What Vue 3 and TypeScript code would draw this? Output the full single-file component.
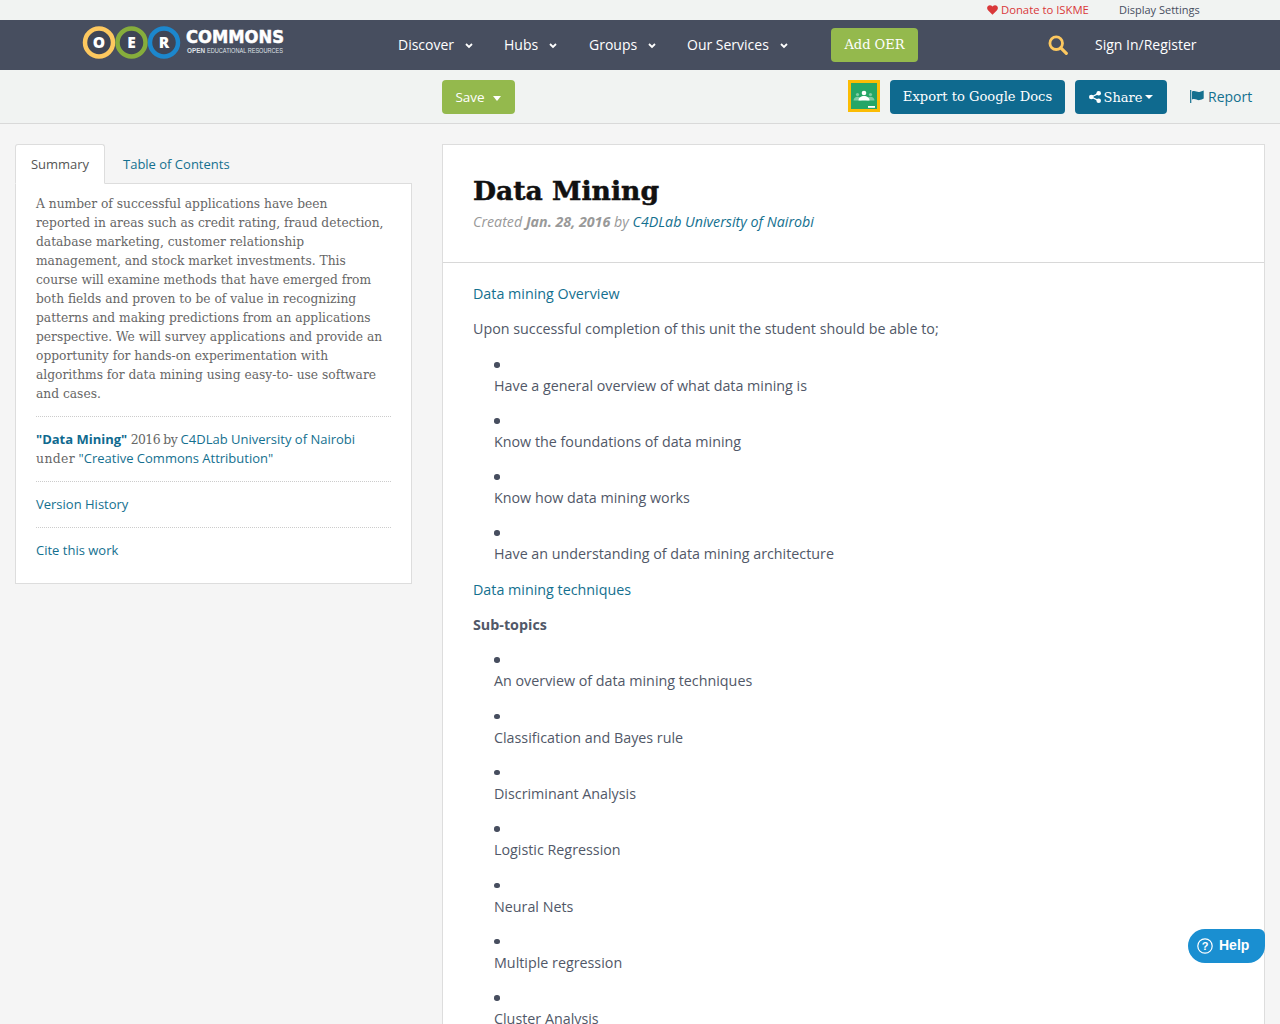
<script setup lang="ts">
const summaryLines: string[] = [
  'A number of successful applications have been',
  'reported in areas such as credit rating, fraud detection,',
  'database marketing, customer relationship',
  'management, and stock market investments. This',
  'course will examine methods that have emerged from',
  'both fields and proven to be of value in recognizing',
  'patterns and making predictions from an applications',
  'perspective. We will survey applications and provide an',
  'opportunity for hands-on experimentation with',
  'algorithms for data mining using easy-to- use software',
  'and cases.'
]
const navItems: { label: string; cls: string }[] = [
  { label: 'Discover', cls: 'n1' },
  { label: 'Hubs', cls: 'n2' },
  { label: 'Groups', cls: 'n3' },
  { label: 'Our Services', cls: 'n4' }
]
const outcomes: string[] = [
  'Have a general overview of what data mining is',
  'Know the foundations of data mining',
  'Know how data mining works',
  'Have an understanding of data mining architecture'
]
const topics: string[] = [
  'An overview of data mining techniques',
  'Classification and Bayes rule',
  'Discriminant Analysis',
  'Logistic Regression',
  'Neural Nets',
  'Multiple regression',
  'Cluster Analysis'
]
</script>

<template>
  <div class="page">
    <div class="topbar">
      <a class="donate">
        <svg class="heart" viewBox="0 0 24 22" width="11" height="10"><path d="M12 21.5 2.600 12.200C-.6 9-.6 4.600 2 2.200 4.700-.3 9-.2 12 3.400 15-.2 19.300-.3 22 2.200c2.600 2.400 2.600 6.800-.6 10z" fill="#d9383a"/></svg>
        Donate to ISKME
      </a>
      <a class="display">Display Settings</a>
    </div>

    <header class="nav">
      <svg class="logo" width="260" height="36" viewBox="0 0 260 36">
        <circle cx="17" cy="17.500" r="14" fill="#3f4555" stroke="#fdc85f" stroke-width="4.500"/>
        <circle cx="49.500" cy="17.500" r="14" fill="#3f4555" stroke="#86ad3c" stroke-width="4.500"/>
        <circle cx="82" cy="17.500" r="14" fill="#3f4555" stroke="#1c87cd" stroke-width="4.500"/>
        <text x="17" y="23" class="lg">O</text>
        <text x="49.500" y="23" class="lg">E</text>
        <text x="82" y="23" class="lg">R</text>
        <text x="104" y="18" class="lc" textLength="98" lengthAdjust="spacingAndGlyphs">COMMONS</text>
        <text x="105" y="28.300" class="ls lsb" textLength="18" lengthAdjust="spacingAndGlyphs">OPEN</text>
        <text x="125" y="28.300" class="ls" textLength="76" lengthAdjust="spacingAndGlyphs">EDUCATIONAL RESOURCES</text>
      </svg>
      <nav class="menu">
        <a v-for="item in navItems" :key="item.label" class="menu-item" :class="item.cls">
          {{ item.label }}
          <svg class="chev" width="8" height="6" viewBox="0 0 8 6"><path d="M1 1l3 3 3-3" fill="none" stroke="#fff" stroke-width="1.800"/></svg>
        </a>
      </nav>
      <a class="add">Add OER</a>
      <svg class="search" width="20" height="20" viewBox="0 0 20 20"><circle cx="8.200" cy="8.200" r="6.300" fill="none" stroke="#fdc85f" stroke-width="2.800"/><path d="M12.800 12.800 18.300 18.300" stroke="#fdc85f" stroke-width="3.200" stroke-linecap="round"/></svg>
      <a class="sign">Sign In/Register</a>
    </header>

    <div class="toolbar">
      <a class="btn save">Save <i class="caret save-caret"></i></a>
      <div class="spacer"></div>
      <div class="classroom">
        <svg width="26" height="26" viewBox="0 0 26 26">
          <rect width="26" height="26" fill="#25a667"/>
          <circle cx="6.500" cy="11.500" r="1.600" fill="#7fcba3"/>
          <circle cx="19.500" cy="11.500" r="1.600" fill="#7fcba3"/>
          <path d="M2.500 17.500c0-2.500 2-3.800 4-3.800s4 1.300 4 3.800zM15.500 17.500c0-2.500 2-3.800 4-3.800s4 1.300 4 3.800z" fill="#7fcba3"/>
          <circle cx="13" cy="10" r="2.300" fill="#fff"/>
          <path d="M7.500 17.500c0-3 2.500-4.600 5.500-4.600s5.500 1.600 5.500 4.600z" fill="#fff"/>
          <rect x="17" y="23" width="7" height="1.800" fill="#fff"/>
        </svg>
      </div>
      <a class="btn export">Export to Google Docs</a>
      <a class="btn share">
        <svg width="12" height="12" viewBox="0 0 12 12"><circle cx="2.300" cy="6" r="2.300" fill="#fff"/><circle cx="9.700" cy="2.300" r="2.300" fill="#fff"/><circle cx="9.700" cy="9.700" r="2.300" fill="#fff"/><path d="M2.300 6 9.700 2.300M2.300 6l7.400 3.700" stroke="#fff" stroke-width="1.300"/></svg>
        Share <i class="caret"></i>
      </a>
      <a class="report">
        <svg width="14" height="13" viewBox="0 0 14 13"><path d="M.7 0v13" stroke="#14708f" stroke-width="1.200"/><path d="M2 1.500c3-1.500 5 1 7.500.4 1.500-.3 3-.8 4.200-1.400v8c-1.200.9-2.700 1.400-4.200 1.600-2.500.3-4.500-2-7.500-.6z" fill="#14708f"/></svg>
        <span>Report</span>
      </a>
    </div>

    <main class="content">
      <aside class="side">
        <div class="tabs">
          <a class="tab active">Summary</a>
          <a class="tab">Table of Contents</a>
        </div>
        <div class="panel">
          <p class="summary"><span v-for="line in summaryLines" :key="line" class="sline">{{ line }}</span></p>
          <div class="sec attribution">
            <a class="strong">"Data Mining"</a> <span class="sf year">2016 by</span> <a>C4DLab University of Nairobi</a><br>
            <span class="sf under">under</span> <a>"Creative Commons Attribution"</a>
          </div>
          <div class="sec"><a>Version History</a></div>
          <div class="sec last"><a>Cite this work</a></div>
        </div>
      </aside>

      <article class="main">
        <div class="head">
          <h1>Data Mining</h1>
          <p class="meta">Created <b>Jan. 28, 2016</b> by <a>C4DLab University of Nairobi</a></p>
        </div>
        <div class="body">
          <p class="para"><a>Data mining Overview</a></p>
          <p class="para">Upon successful completion of this unit the student should be able to;</p>
          <ul class="list first">
            <li v-for="t in outcomes" :key="t"><span class="dot"></span><span>{{ t }}</span></li>
          </ul>
          <p class="para"><a>Data mining techniques</a></p>
          <p class="para sub"><b>Sub-topics</b></p>
          <ul class="list">
            <li v-for="t in topics" :key="t"><span class="dot"></span><span>{{ t }}</span></li>
          </ul>
        </div>
      </article>
    </main>

    <a class="help">
      <svg width="16" height="16" viewBox="0 0 16 16"><circle cx="8" cy="8" r="7.200" fill="none" stroke="#fff" stroke-width="1.200"/><text x="8" y="12" class="q">?</text></svg>
      <span class="help-label">Help</span>
    </a>
  </div>
</template>

<style scoped>
.page {
  height: 1024px;
  overflow: hidden;
  background: #f5f5f5;
  font-family: "Open Sans", sans-serif;
  color: #515868;
  font-size: 14px;
  position: relative;
}
a { color: #14708f; text-decoration: none; }
.topbar {
  height: 20px;
  box-sizing: border-box;
  padding-bottom: 2px;
  background: #f1f3f2;
  display: flex;
  align-items: center;
  padding-left: 987px;
  font-size: 11px;
}
.donate { color: #d9383a; width: 132px; white-space: nowrap; font-size: 11.300px; }
.heart { vertical-align: -1px; }
.display { color: #474e5f; white-space: nowrap; }

.nav {
  height: 50px;
  background: #474e5f;
  display: flex;
  align-items: center;
  padding-left: 82px;
  color: #fff;
}
.logo { flex: none; width: 260px; margin-top: -4px; }
.lg { font: 800 15.500px "Open Sans", sans-serif; fill: #fff; text-anchor: middle; }
.lc { font: 700 17px "DejaVu Sans", sans-serif; fill: #fff; stroke: #fff; stroke-width: .5px; }
.ls { font: 400 6.500px "Liberation Sans", sans-serif; fill: #dfe1e6; }
.lsb { font-weight: 700; }
.menu { display: flex; margin-left: 56px; width: 433px; flex: none; margin-bottom: 2px; }
.menu-item { color: #fff; white-space: nowrap; font-size: 14px; }
.n1 { width: 106px; }
.n2 { width: 85px; }
.n3 { width: 98px; }
.chev { margin-left: 7px; vertical-align: 1px; }
.add {
  width: 87px;
  height: 34px;
  box-sizing: border-box;
  background: #94b94d;
  border-radius: 4px;
  color: #fff;
  font: 13px/34px "DejaVu Serif", serif;
  text-align: center;
  white-space: nowrap;
}
.search { margin-left: 130px; flex: none; }
.sign { color: #fff; margin-left: 27px; white-space: nowrap; margin-bottom: 2px; }

.toolbar {
  background: #f1f3f2;
  border-bottom: 1px solid #d9d9d9;
  display: flex;
  align-items: flex-start;
  padding-top: 10px;
  height: 43px;
  padding-left: 442px;
}
.btn {
  height: 34px;
  box-sizing: border-box;
  border-radius: 4px;
  color: #fff;
  display: flex;
  align-items: center;
  justify-content: center;
  white-space: nowrap;
}
.save { width: 73px; background: #94b94d; font-size: 13.500px; gap: 8px; padding-right: 1px; }
.caret {
  display: inline-block;
  width: 0;
  height: 0;
  border-left: 4px solid transparent;
  border-right: 4px solid transparent;
  border-top: 4px solid #fff;
}
.save-caret { border-left-width: 4.500px; border-right-width: 4.500px; border-top-width: 5px; margin-top: 2px; }
.spacer { width: 333px; flex: none; }
.classroom {
  width: 32px;
  height: 32px;
  box-sizing: border-box;
  border: 3px solid #fbbc05;
  background: #25a667;
  flex: none;
}
.classroom svg { display: block; }
.export { width: 175px; background: #0f6a8f; margin-left: 10px; font: 13.100px "DejaVu Serif", serif; padding-bottom: 1px; }
.share { width: 92px; background: #0f6a8f; margin-left: 10px; font: 13px "DejaVu Serif", serif; gap: 3px; }
.report { margin-left: 23px; height: 32px; display: flex; align-items: center; gap: 4px; white-space: nowrap; }

.content {
  display: flex;
  align-items: flex-start;
  padding: 20px 15px 0;
}
.side { width: 397px; flex: none; }
.tabs { display: flex; height: 40px; position: relative; z-index: 1; }
.tab {
  height: 40px;
  box-sizing: border-box;
  padding: 0 15px;
  font-size: 13px;
  line-height: 39px;
  border: 1px solid transparent;
  white-space: nowrap;
  margin-right: 2px;
}
.tab.active {
  width: 90px;
  padding: 0;
  text-align: center;
  color: #555;
  background: #fff;
  border-color: #ddd #ddd #fff;
  border-radius: 3px 3px 0 0;
}
.panel {
  margin-top: -1px;
  background: #fff;
  border: 1px solid #ddd;
  padding: 11px 20px 0;
  height: 401px;
  box-sizing: border-box;
  font-size: 13px;
  color: #555;
}
.summary { margin: 0; font: 12.250px/19px "DejaVu Serif", serif; color: #666; }
.sline { display: block; white-space: nowrap; }
.sf { font-family: "DejaVu Serif", serif; font-size: 12.400px; line-height: 1; color: #666; }
.year { letter-spacing: -.55px; }
.under { letter-spacing: .4px; }
.sec {
  border-top: 1px dotted #ccc;
  padding: 13px 0 12px;
  line-height: 19px;
  height: 46px;
  box-sizing: border-box;
}
.attribution { height: 65px; margin-top: 12px; padding-top: 13px; white-space: nowrap; }
.strong { font-weight: 700; color: #0f6a8f; }

.main {
  margin-left: 30px;
  width: 823px;
  flex: none;
  background: #fff;
  border: 1px solid #ddd;
  box-sizing: border-box;
  height: 1200px;
}
.head { height: 118px; border-bottom: 1px solid #d8d8d8; padding: 29px 30px 0; box-sizing: border-box; }
h1 {
  margin: 0;
  font: 700 26.600px/34px "DejaVu Serif", serif;
  color: #111;
  -webkit-text-stroke: .5px #111;
}
.meta { margin: 4px 0 0; font-style: italic; color: #999; font-size: 14.250px; line-height: 20px; }
.body { padding: 21px 30px 0; font-size: 14.300px; }
.para { margin: 0 0 15px; line-height: 20px; }
.para.sub { margin-bottom: 14.300px; }
.list { list-style: none; margin: 0; padding: 0 0 0 21px; }
.list li {
  height: 56.330px;
  display: flex;
  flex-direction: column;
  line-height: 20px;
  padding-top: 2px;
  box-sizing: border-box;
}
.list.first li { height: 56px; }
.list.first { margin-bottom: 2px; }
.dot { width: 5.500px; height: 5.500px; border-radius: 50%; background: #474e5f; margin: 6px 0 8.500px 0; flex: none; }

.help {
  position: fixed;
  left: 1188px;
  top: 929px;
  width: 77px;
  height: 34px;
  background: #1a8fd1;
  border-radius: 17px 6px 17px 17px;
  color: #fff;
  font: 700 14px "Liberation Sans", sans-serif;
  display: flex;
  align-items: center;
  gap: 6px;
  padding-left: 9px;
  box-sizing: border-box;
}
.help-label { margin-bottom: 2px; }
.q { font: 700 11px "Liberation Sans", sans-serif; fill: #fff; text-anchor: middle; }
</style>
